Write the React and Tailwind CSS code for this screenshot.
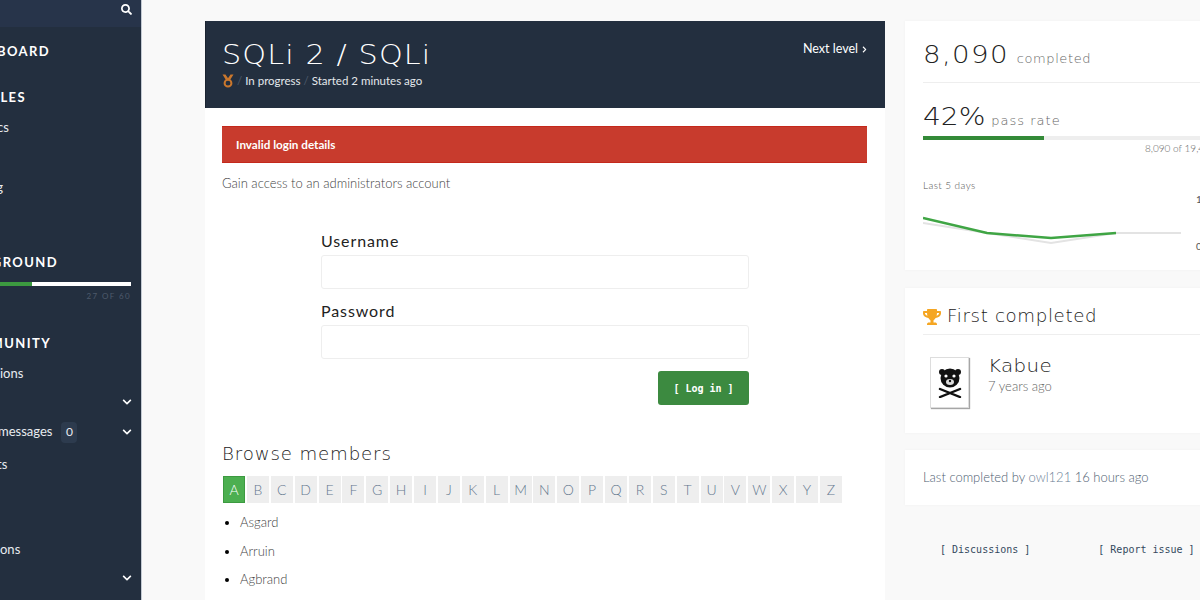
import { FaSearch, FaChevronDown, FaChevronRight, FaTrophy } from "react-icons/fa";

const letters = "ABCDEFGHIJKLMNOPQRSTUVWXYZ".split("");
const members = ["Asgard", "Arruin", "Agbrand"];

const heading = "font-['DejaVu_Sans',sans-serif] font-extralight";
const mono = "font-['DejaVu_Sans_Mono',monospace]";

const SideHead = ({ text, className = "" }) => (
  <div className={`h-[30px] -ml-[100px] flex items-center justify-end text-[13px] font-bold tracking-[1.4px] text-white ${className}`}>
    {text}
  </div>
);

const SideItem = ({ text, shift = "", chevron, badge }) => (
  <div className="relative h-[29.3px] w-[141px] flex items-center text-[13px] text-[#e8ecf0]">
    {text && <span className={shift}>{text}</span>}
    {badge && <span className="ml-[9px] w-[16px] h-[21px] rounded-[4px] bg-[#2d3b4e] text-[12px] flex items-center justify-center">{badge}</span>}
    {chevron && <FaChevronDown className="absolute right-[9px] top-[9px] text-white text-[10px]" />}
  </div>
);

const Medal = () => (
  <svg width="12" height="14" viewBox="0 0 12 14" fill="none">
    <path d="M0.5 0.5 L3.5 0.5 L6 4.2 L8.5 0.5 L11.5 0.5 L8.2 5.8 L3.8 5.8 Z" fill="#c9772d" />
    <circle cx="6" cy="9.2" r="3.4" stroke="#c9772d" strokeWidth="2" />
  </svg>
);

const Bear = () => (
  <svg width="26" height="30" viewBox="0 0 26 30">
    <circle cx="5" cy="4" r="3" fill="#111" />
    <circle cx="21" cy="4" r="3" fill="#111" />
    <circle cx="13" cy="10" r="9.5" fill="#111" />
    <circle cx="9" cy="8" r="1.6" fill="#fff" />
    <circle cx="17" cy="8" r="1.6" fill="#fff" />
    <ellipse cx="13" cy="14" rx="4" ry="3" fill="#ddd" />
    <circle cx="13" cy="13" r="1.2" fill="#111" />
    <path d="M3 21 L23 29 M23 21 L3 29" stroke="#111" strokeWidth="2.4" strokeLinecap="round" />
  </svg>
);

const App = () => {
  return (
    <div className="w-[1200px] h-[600px] overflow-hidden flex bg-[#f9f9f9] font-['Lato',sans-serif]">
      {/* Sidebar */}
      <div className="w-[142px] h-[600px] shrink-0 overflow-hidden bg-[#232f3f] border-r border-[#c3cad3]">
        <div className="h-[27px] bg-[#27344a] flex justify-end pr-[9px] pt-[4px]">
          <FaSearch className="text-white text-[11px]" />
        </div>
        <div className="pt-[10px]">
          <SideHead text="DASHBOARD" className="w-[150px]" />
          <SideHead text="ARTICLES" className="w-[126px] mt-[16px]" />
          <div className="h-[30px] flex items-center text-[13px] text-[#e8ecf0] -ml-[6px]">ics</div>
          <div className="h-[30px]" />
          <div className="h-[30px] flex items-center text-[13px] text-[#e8ecf0] -ml-[11px]">ng</div>
          <SideHead text="PLAYGROUND" className="w-[158px] mt-[45px]" />
          <div className="mt-[4px] w-[131px] h-[4px] bg-white">
            <div className="w-[32px] h-[4px] bg-[#3c9a40]" />
          </div>
          <div className="w-[131px] mt-[4px] text-right text-[8px] leading-[12px] tracking-[1.4px] text-[#4d5a6b]">27 OF 60</div>
          <SideHead text="COMMUNITY" className="w-[151px] mt-[27px]" />
          <SideItem text="ions" />
          <SideItem chevron />
          <SideItem text="messages" shift="-ml-[2px]" badge="0" chevron />
          <SideItem text="ts" shift="-ml-[3px] mt-[6px]" />
          <SideItem />
          <SideItem />
          <SideItem text="ons" />
          <SideItem chevron />
        </div>
      </div>

      {/* Main column */}
      <div className="w-[680px] ml-[63px] mt-[21px] h-[579px] shrink-0 bg-white overflow-hidden">
        <div className="h-[87px] bg-[#232f3f] pl-[16px] pr-[17px] pt-[19px] flex justify-between border-l border-[#1a2330]">
          <div>
            <h1 className={`${heading} origin-left scale-x-[1.12] text-[27px] leading-[30px] tracking-[1px] text-white`}>SQLi 2 / SQLi</h1>
            <div className="mt-[2px] flex items-center text-[11.5px] leading-[18px] text-[#e4e8ec]">
              <Medal />
              <span className="mx-[3px] text-[#4d5a6b]">/</span>
              <span>In progress</span>
              <span className="mx-[3px] text-[#4d5a6b]">/</span>
              <span>Started 2 minutes ago</span>
            </div>
          </div>
          <a className="flex items-center h-[18px] text-[12.5px] text-white">
            Next level <FaChevronRight className="ml-[3px] text-[7px]" />
          </a>
        </div>

        <div className="pl-[17px] pr-[18px] pt-[18px]">
          <div className="h-[37px] bg-[#c83b2d] border-t border-b border-[#c4281b] flex items-center pl-[14px] text-[11.7px] font-bold text-white">
            Invalid login details
          </div>
          <p className="mt-[11px] text-[13px] leading-[18px] font-light text-[#3f3f3f]">Gain access to an administrators account</p>

          <form className="w-[428px] ml-[99px] mt-[39px]">
            <label className="block text-[16px] leading-[20px] tracking-[0.9px] text-[#222]">Username</label>
            <input type="text" className="block mt-[4px] w-full h-[34px] border border-[#eeeeee] rounded-[3px] bg-white" />
            <label className="block mt-[12px] text-[16px] leading-[20px] tracking-[0.9px] text-[#222]">Password</label>
            <input type="password" className="block mt-[4px] w-full h-[34px] border border-[#eeeeee] rounded-[3px] bg-white" />
            <div className="flex justify-end mt-[12px]">
              <button type="button" className={`${mono} font-bold w-[91px] h-[34px] rounded-[3px] bg-[#3c8a40] text-[10px] text-white`}>[ Log in ]</button>
            </div>
          </form>

          <h2 className={`${heading} mt-[37px] origin-left scale-x-[1.07] text-[17px] leading-[24px] tracking-[0.8px] text-[#222]`}>Browse members</h2>
          <div className="mt-[10px] ml-[1px] flex gap-[1.88px]">
            {letters.map((l) => (
              <span
                key={l}
                className={l === "A"
                  ? "w-[22px] h-[27px] flex items-center justify-center text-[14px] font-light bg-[#4caf50] border border-[#3c9a40] text-white"
                  : "w-[22px] h-[27px] flex items-center justify-center text-[14px] font-light bg-[#eeeeee] text-[#64788e]"}
              >
                {l}
              </span>
            ))}
          </div>
          <ul className="mt-[5px] list-disc pl-[18px] text-[13px] font-light text-[#444] marker:text-black">
            {members.map((m) => (
              <li key={m} className="h-[28.5px] leading-[28.5px]">{m}</li>
            ))}
          </ul>
        </div>
      </div>

      {/* Right column */}
      <div className="w-[323px] ml-[20px] mt-[21px] shrink-0">
        <div className="h-[249px] bg-white shadow-[0_0_3px_rgba(0,0,0,0.04)] px-[18px] pt-[16px]">
          <div className="flex items-baseline h-[46px] border-b border-[#eeeeee]">
            <span className={`${heading} inline-block origin-left scale-x-[1.15] text-[24px] leading-[36px] tracking-[1.2px] text-[#222]`}>8,090</span>
            <span className={`${heading} ml-[19px] text-[13px] tracking-[0.6px] text-[#666]`}>completed</span>
          </div>
          <div className="mt-[19px] flex items-baseline h-[30px]">
            <span className={`${heading} inline-block origin-left scale-x-[1.17] text-[24px] leading-[30px] text-[#222]`}>42%</span>
            <span className={`${heading} ml-[15px] text-[13px] tracking-[1px] text-[#666]`}>pass rate</span>
          </div>
          <div className="mt-[4px] h-[4px] bg-[#eeeeee]">
            <div className="w-[121px] h-[4px] bg-[#338a38]" />
          </div>
          <div className="mt-[1px] ml-[222px] whitespace-nowrap text-[10px] leading-[14px] font-light text-[#666]">8,090 of 19,4</div>
          <div className="mt-[23px] text-[10px] leading-[14px] tracking-[0.4px] font-light text-[#555]">Last 5 days</div>
          <div className="relative h-[60px]">
            <svg width="280" height="60" viewBox="0 0 280 60" fill="none" className="absolute left-0 top-0">
              <path d="M0 31 L64 41 L128 51 L193 41 L258 41" stroke="#e3e3e3" strokeWidth="2" />
              <path d="M0 26 L64 41 L128 46 L193 41" stroke="#3fa544" strokeWidth="2.5" />
            </svg>
            <span className="absolute left-[273px] top-0 text-[10px] leading-[14px] text-[#555]">1</span>
            <span className="absolute left-[273px] top-[47px] text-[10px] leading-[14px] text-[#555]">0</span>
          </div>
        </div>

        <div className="mt-[18px] h-[145px] bg-white shadow-[0_0_3px_rgba(0,0,0,0.04)] px-[18px] pt-[13px]">
          <div className="h-[34px] flex items-center border-b border-[#eeeeee] pb-[1px]">
            <FaTrophy className="text-[#f5a623] text-[18px]" />
            <span className={`${heading} ml-[6px] inline-block origin-left scale-x-[1.07] text-[17px] tracking-[0.6px] text-[#222]`}>First completed</span>
          </div>
          <div className="flex mt-[22px] ml-[7px]">
            <div className="w-[39px] h-[51px] border border-[#ddd] shadow-[1px_1px_1px_rgba(0,0,0,0.35)] flex items-center justify-center">
              <Bear />
            </div>
            <div className="ml-[19px]">
              <div className={`${heading} origin-left scale-x-[1.17] text-[17px] leading-[19px] tracking-[0.3px] text-[#222]`}>Kabue</div>
              <div className="text-[13px] leading-[20px] font-light text-[#666]">7 years ago</div>
            </div>
          </div>
        </div>

        <div className="mt-[17px] h-[55px] bg-white shadow-[0_0_3px_rgba(0,0,0,0.04)] px-[18px] flex items-center text-[13px] font-light text-[#4f6172]">
          Last completed by&nbsp;<span className="text-[#6c8096]">owl121</span>&nbsp;16 hours ago
        </div>

        <div className={`${mono} mt-[35px] pt-[1px] flex text-[10px] leading-[18px] text-[#34495e]`}>
          <span className="ml-[35px]">[ Discussions ]</span>
          <span className="ml-[68px]">[ Report issue ]</span>
        </div>
      </div>
    </div>
  );
};

export default App;
